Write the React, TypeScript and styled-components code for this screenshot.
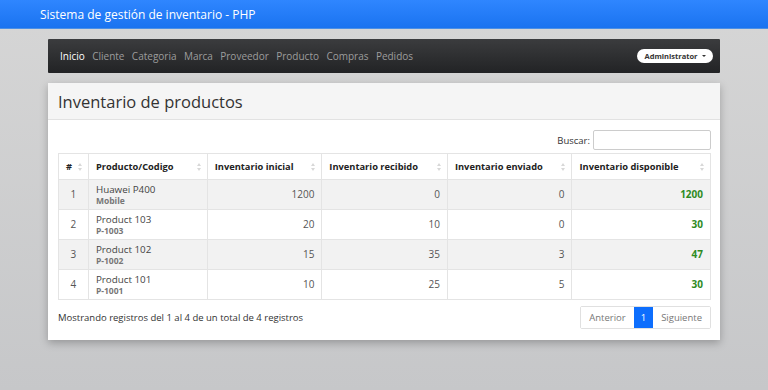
import React from "react";
import styled, { createGlobalStyle } from "styled-components";

interface Row {
  id: number;
  name: string;
  code: string;
  initial: number;
  received: number;
  sent: number;
  available: number;
}

const rows: Row[] = [
  { id: 1, name: "Huawei P400", code: "Mobile", initial: 1200, received: 0, sent: 0, available: 1200 },
  { id: 2, name: "Product 103", code: "P-1003", initial: 20, received: 10, sent: 0, available: 30 },
  { id: 3, name: "Product 102", code: "P-1002", initial: 15, received: 35, sent: 3, available: 47 },
  { id: 4, name: "Product 101", code: "P-1001", initial: 10, received: 25, sent: 5, available: 30 },
];

const menu = ["Inicio", "Cliente", "Categoria", "Marca", "Proveedor", "Producto", "Compras", "Pedidos"];

const GlobalStyle = createGlobalStyle`
  html, body {
    margin: 0;
    padding: 0;
  }
  body {
    font-family: "Open Sans", "Noto Sans", sans-serif;
    background: linear-gradient(#d6d6d6, #c6c7c9);
    min-height: 390px;
    color: #333;
  }
  * { box-sizing: border-box; }
`;

const TopBar = styled.header`
  height: 29px;
  background: linear-gradient(#2f86ff, #1a73f0);
  display: flex;
  align-items: center;
  padding-left: 40px;
  color: #fff;
  font-size: 12px;
  border-bottom: 1px solid #4a8fe6;
`;

const Page = styled.main`
  padding: 10px 48px 0;
`;

const NavBar = styled.nav`
  height: 34px;
  background: linear-gradient(#3b3c3e, #222325);
  display: flex;
  align-items: center;
  padding: 0 7px 0 12px;
  border-radius: 1px;
`;

const NavItem = styled.a<{ $active?: boolean }>`
  font-size: 10px;
  color: ${(p) => (p.$active ? "#fff" : "#9d9d9d")};
  margin-right: 7.4px;
  text-decoration: none;
`;

const Spacer = styled.div`
  flex: 1;
`;

const AdminButton = styled.button`
  background: #fff;
  border: none;
  border-radius: 8px;
  height: 14px;
  width: 76px;
  font-family: inherit;
  font-size: 7.5px;
  font-weight: 700;
  color: #333;
  display: flex;
  align-items: center;
  justify-content: center;
  gap: 4px;
  padding: 0;
`;

const Caret = styled.span`
  border-left: 2px solid transparent;
  border-right: 2px solid transparent;
  border-top: 2px solid #333;
`;

const Panel = styled.section`
  margin-top: 10px;
  background: #fff;
  box-shadow: 0 3px 8px rgba(0, 0, 0, 0.25);
`;

const PanelHeader = styled.div`
  height: 37px;
  background: #f5f5f5;
  border-bottom: 1px solid #e2e2e2;
  display: flex;
  align-items: center;
  padding-left: 10px;
`;

const PanelTitle = styled.h2`
  margin: 0;
  font-size: 16.5px;
  font-weight: 400;
  color: #333;
`;

const PanelBody = styled.div`
  padding: 10px 9px 11px 10px;
`;

const SearchRow = styled.div`
  display: flex;
  justify-content: flex-end;
  align-items: center;
  gap: 3px;
  font-size: 9.5px;
  color: #333;
  margin-bottom: 3px;
`;

const SearchInput = styled.input`
  width: 118px;
  height: 20px;
  border: 1px solid #ccc;
  border-radius: 2px;
`;

const Table = styled.table`
  width: 100%;
  border-collapse: collapse;
`;

const Th = styled.th<{ $w: number }>`
  width: ${(p) => p.$w}px;
  height: 26px;
  text-align: left;
  font-size: 9.3px;
  font-weight: 700;
  color: #222;
  padding: 0 7px;
  border: 1px solid #e4e4e4;
  position: relative;
`;

const SortIcon = styled.svg`
  position: absolute;
  right: 6px;
  top: 9px;
`;

const Tr = styled.tr<{ $odd: boolean }>`
  background: ${(p) => (p.$odd ? "#f2f2f2" : "#fff")};
  height: 30px;
`;

const Td = styled.td<{ $num?: boolean; $center?: boolean }>`
  border-left: 1px solid #e4e4e4;
  border-right: 1px solid #e4e4e4;
  border-bottom: 1px solid #e4e4e4;
  padding: 0 7px;
  font-size: 10px;
  color: #555;
  text-align: ${(p) => (p.$num ? "right" : p.$center ? "center" : "left")};
  line-height: 11px;
`;

const Name = styled.div`
  font-size: 9.8px;
  color: #444;
`;

const Code = styled.div`
  font-size: 8.5px;
  font-weight: 700;
  color: #777;
`;

const Available = styled.span`
  color: #2e8b1f;
  font-weight: 700;
`;

const Footer = styled.div`
  display: flex;
  justify-content: space-between;
  align-items: center;
  margin-top: 6px;
`;

const Info = styled.span`
  font-size: 9.5px;
  color: #333;
`;

const Pagination = styled.div`
  display: flex;
  border: 1px solid #e0e0e0;
  border-radius: 2px;
  height: 23px;
`;

const PageButton = styled.span<{ $active?: boolean }>`
  display: flex;
  align-items: center;
  padding: 0 ${(p) => (p.$active ? "7px" : "8px")};
  font-size: 9.5px;
  background: ${(p) => (p.$active ? "#0d6efd" : "#fff")};
  color: ${(p) => (p.$active ? "#fff" : "#777")};
`;

const widths = [30, 119, 115, 126, 125, 139];
const headers = ["#", "Producto/Codigo", "Inventario inicial", "Inventario recibido", "Inventario enviado", "Inventario disponible"];

const Sort = () => (
  <SortIcon width="4" height="8" viewBox="0 0 4 8">
    <path d="M0 3 L2 0 L4 3 Z M0 5 L2 8 L4 5 Z" fill="#d8d8d8" />
  </SortIcon>
);

export default function App() {
  return (
    <>
      <GlobalStyle />
      <TopBar>Sistema de gestión de inventario - PHP</TopBar>
      <Page>
        <NavBar>
          {menu.map((m, i) => (
            <NavItem key={m} $active={i === 0}>
              {m}
            </NavItem>
          ))}
          <Spacer />
          <AdminButton>
            Administrator <Caret />
          </AdminButton>
        </NavBar>
        <Panel>
          <PanelHeader>
            <PanelTitle>Inventario de productos</PanelTitle>
          </PanelHeader>
          <PanelBody>
            <SearchRow>
              Buscar: <SearchInput />
            </SearchRow>
            <Table>
              <thead>
                <tr>
                  {headers.map((h, i) => (
                    <Th key={h} $w={widths[i]}>
                      {h}
                      <Sort />
                    </Th>
                  ))}
                </tr>
              </thead>
              <tbody>
                {rows.map((r, i) => (
                  <Tr key={r.id} $odd={i % 2 === 0}>
                    <Td $center>{r.id}</Td>
                    <Td>
                      <Name>{r.name}</Name>
                      <Code>{r.code}</Code>
                    </Td>
                    <Td $num>{r.initial}</Td>
                    <Td $num>{r.received}</Td>
                    <Td $num>{r.sent}</Td>
                    <Td $num>
                      <Available>{r.available}</Available>
                    </Td>
                  </Tr>
                ))}
              </tbody>
            </Table>
            <Footer>
              <Info>Mostrando registros del 1 al 4 de un total de 4 registros</Info>
              <Pagination>
                <PageButton>Anterior</PageButton>
                <PageButton $active>1</PageButton>
                <PageButton>Siguiente</PageButton>
              </Pagination>
            </Footer>
          </PanelBody>
        </Panel>
      </Page>
    </>
  );
}
